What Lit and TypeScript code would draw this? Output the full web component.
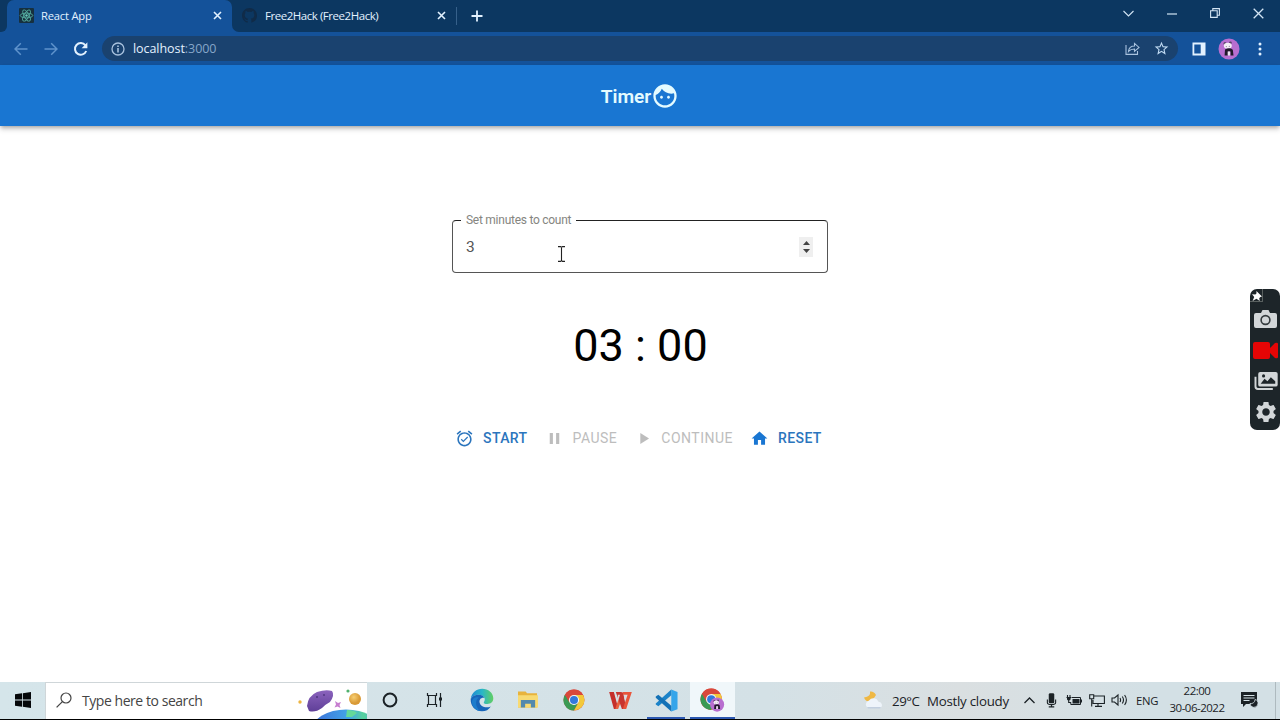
import { LitElement, html, css, svg } from "lit";
import { customElement } from "lit/decorators.js";

const icon = (name: string, size: number, body: unknown, box = "0 0 24 24", h = size) =>
  html`<svg class="ic ${name}" width=${size} height=${h} viewBox=${box} fill="currentColor">${body}</svg>`;

const line = (d: string, w = 1.2) =>
  svg`<path d=${d} fill="none" stroke="currentColor" stroke-width=${w} />`;

const avatar = svg`
  <circle cx="11" cy="11" r="10.5" fill="#b86ed0"/>
  <circle cx="7" cy="5.600" r="1.500" fill="#5a4468"/><circle cx="12.400" cy="4.800" r="1.400" fill="#5a4468"/>
  <ellipse cx="9.800" cy="7.800" rx="4" ry="3" fill="#f4eef6"/>
  <circle cx="8.300" cy="8.600" r=".6" fill="#8c7a95"/><circle cx="11.300" cy="8.300" r=".6" fill="#8c7a95"/>
  <path d="M7 11.500q4.500-2.500 7.800.3l.7 5.700h-3v-4h-2.600v4H6.600z" fill="#20182a"/>
  <path d="M9.700 13.500h2.400v4H9.700z" fill="#eee4f0"/>`;

const chromeLogo = svg`
  <circle cx="12" cy="12" r="10.500" fill="#d9483b"/>
  <path d="M12 12 2.900 6.750A10.500 10.500 0 0 0 12 22.500l4.400-7.900z" fill="#3a9a53"/>
  <path d="M12 12 16.500 14.600 12 22.500A10.500 10.500 0 0 0 21.100 6.900H12z" fill="#f3c93a"/>
  <path d="M2.900 6.750 7.400 14.500 12 12V6.900h9.100A10.500 10.500 0 0 0 2.900 6.750z" fill="#d9483b"/>
  <circle cx="12" cy="12" r="5.100" fill="#f4f6f8"/><circle cx="12" cy="12" r="4" fill="#3379dc"/>`;

@customElement("browser-chrome")
class BrowserChrome extends LitElement {
  static styles = css`
    :host { display: block; height: 65px; flex: none; background: #14529a; color: #e2f1ff;
      font-family: "Open Sans", "Noto Sans", sans-serif; }
    svg { display: block; flex: none; }
    .strip { display: flex; height: 32px; background: #0c3761; }
    .lead { width: 7px; background: #0c3761; border-radius: 0 0 6px 0; }
    .under { background: #14529a; display: flex; }
    .tab { display: flex; align-items: center; box-sizing: border-box; height: 32px; padding-bottom: 1px; font-size: 11.500px; white-space: nowrap; }
    .tab span { flex: 1; }
    .active { width: 225px; padding-left: 12px; padding-right: 10px; background: #14529a; border-radius: 7px 7px 0 0; }
    .active span { margin-left: 7px; letter-spacing: -0.2px; font-size: 11.200px; }
    .idle { width: 224px; padding-left: 10px; padding-right: 10px; background: #0c3761; border-radius: 0 0 0 7px; }
    .idle span { margin-left: 8px; letter-spacing: -0.46px; }
    .sep { width: 1px; height: 18px; margin-top: 7px; background: #36608a; }
    .plus { margin: 10px 0 0 14px; }
    .win { display: flex; align-items: center; margin-left: auto; height: 26px; color: #d2e4f4; }
    .v { margin-right: 33px; }
    .min { margin-right: 33px; }
    .max { margin-right: 33px; }
    .cls { margin-right: 16px; }
    .bar { display: flex; align-items: center; height: 33px; }
    .back { margin-left: 14px; color: #5f93cc; }
    .fwd { margin-left: 16px; color: #5f93cc; }
    .reload { margin-left: 15px; }
    .omni { display: flex; align-items: center; margin-left: 13px; width: 1076px; height: 25px; box-sizing: border-box;
      border-radius: 13px; background: #1a426f; padding: 0 9px; }
    .url { flex: 1; margin-left: 8px; font-size: 12.500px; letter-spacing: -0.06px; }
    .url b { font-weight: 400; color: #86a6c9; }
    .info, .share { color: #a9c2de; }
    .star { margin-left: 14px; color: #c0daf2; }
    .side { margin-left: 14px; }
    .av { margin-left: 12px; }
    .dots { margin-left: 18px; }
  `;
  render() {
    const close = icon("x", 9, line("M1 1l7 7M8 1l-7 7", 1.6), "0 0 9 9");
    return html`
      <div class="strip">
        <div class="under"><div class="lead"></div></div>
        <div class="tab active">
          ${icon("react", 15, svg`<rect width="15" height="15" rx="1" fill="#16303f"/>
            <g fill="none" stroke="#52aa9d" stroke-width=".9">
              <ellipse cx="7.500" cy="7.500" rx="6.300" ry="2.400"/>
              <ellipse cx="7.500" cy="7.500" rx="6.300" ry="2.400" transform="rotate(60 7.500 7.500)"/>
              <ellipse cx="7.500" cy="7.500" rx="6.300" ry="2.400" transform="rotate(120 7.500 7.500)"/></g>
            <circle cx="7.500" cy="7.500" r="1.200" fill="#67cabd"/>`, "0 0 15 15")}
          <span>React App</span>${close}
        </div>
        <div class="under"><div class="tab idle">
          ${icon("gh", 15, svg`<path fill="#102b48" d="M8 0C3.580 0 0 3.580 0 8c0 3.540 2.290 6.530 5.470 7.590.4.070.55-.17.55-.38v-1.490c-2.230.48-2.700-.94-2.700-.94-.36-.92-.89-1.170-.89-1.170-.73-.5.050-.49.050-.49.810.060 1.230.83 1.230.83.720 1.230 1.880.87 2.340.67.070-.52.280-.88.510-1.080-1.780-.2-3.640-.89-3.640-3.950 0-.87.310-1.590.820-2.150-.08-.2-.36-1.020.080-2.120 0 0 .67-.21 2.200.82a7.600 7.600 0 0 1 4 0c1.530-1.040 2.200-.82 2.200-.82.440 1.100.160 1.920.080 2.120.510.560.820 1.270.820 2.150 0 3.070-1.870 3.750-3.650 3.950.290.250.540.730.540 1.480v2.190c0 .21.150.46.550.38A8 8 0 0 0 16 8c0-4.420-3.580-8-8-8z"/>`, "0 0 16 16")}
          <span>Free2Hack (Free2Hack)</span>${close}
        </div></div>
        <div class="sep"></div>
        ${icon("plus", 12, line("M6 .5v11M.5 6h11", 1.8), "0 0 12 12")}
        <div class="win">
          ${icon("v", 11, line("M.5 3l5 5 5-5", 1.1), "0 0 11 11")}
          ${icon("min", 10, line("M0 6h10", 1.2), "0 0 10 10")}
          ${icon("max", 10, line("M.6 2.800h6.600v6.600H.6zM2.800 2.800V.6h6.600v6.600H7.200", 1.1), "0 0 10 10")}
          ${icon("cls", 11, line("M.7.7l9.600 9.600M10.300.7L.7 10.300", 1.3), "0 0 11 11")}
        </div>
      </div>
      <div class="bar">
        ${icon("back", 14, line("M13.500 7H1.200M6.800 1.200L1 7l5.800 5.800", 1.5), "0 0 14 14")}
        ${icon("fwd", 14, line("M.5 7h12.300M7.200 1.200L13 7l-5.800 5.800", 1.5), "0 0 14 14")}
        ${icon("reload", 16, svg`${line("M13.200 10a5.800 5.800 0 1 1-.8-5.600", 2)}<path d="M14.400 1.300v6H8.600z"/>`, "0 0 16 16")}
        <div class="omni">
          ${icon("info", 14, svg`<circle cx="7" cy="7" r="6" fill="none" stroke="currentColor" stroke-width="1.300"/><path d="M6.200 6h1.600v4.400H6.200zM6.200 3.400h1.600V5H6.200z"/>`, "0 0 14 14")}
          <div class="url">localhost<b>:3000</b></div>
          ${icon("share", 15, line("M1 4v9.400h11.500V10M3.500 10.500c.4-3.700 2.400-5.500 6-5.500V2.400L14 6.400l-4.500 4V8c-2.800 0-4.600.8-6 2.500z", 1.1), "0 0 15 15")}
          ${icon("star", 15, svg`<path fill-rule="evenodd" d="M22 9.240l-7.190-.62L12 2 9.190 8.630 2 9.240l5.460 4.730L5.820 21 12 17.270 18.180 21l-1.630-7.030L22 9.240zM12 15.400l-3.760 2.270 1-4.280-3.320-2.880 4.380-.38L12 6.100l1.710 4.040 4.380.38-3.320 2.880 1 4.280L12 15.400z"/>`, "1 1 22 22")}
        </div>
        ${icon("side", 14, svg`<path fill-rule="evenodd" d="M.5.5h13v13H.5zM2.300 2.500v9h6.400v-9z"/>`, "0 0 14 14")}
        ${icon("av", 22, avatar, "0 0 22 22")}
        ${icon("dots", 4, svg`<circle cx="2" cy="2" r="1.500"/><circle cx="2" cy="7" r="1.500"/><circle cx="2" cy="12" r="1.500"/>`, "0 0 4 14", 14)}
      </div>`;
  }
}

@customElement("timer-page")
class TimerPage extends LitElement {
  static styles = css`
    :host { display: flex; flex-direction: column; flex: 1; background: #fff; font-family: Roboto, sans-serif; }
    svg { display: block; flex: none; }
    .appbar { display: flex; align-items: center; justify-content: center; height: 61px; background: #1976d2; color: #e4fbff;
      font-size: 19.200px; font-weight: 600; letter-spacing: -0.05px; padding: 1px 0 0; box-sizing: border-box;
      box-shadow: 0 2px 4px -1px rgba(0,0,0,.3), 0 4px 5px rgba(0,0,0,.12); }
    .appbar span { padding-top: 1px; }
    .col { display: flex; flex-direction: column; align-items: center; width: 376px; margin: 85px auto 0; }
    fieldset { width: 376px; height: 62px; box-sizing: border-box;
      margin: 0; padding: 0 14px 0 13px; border: 1px solid #555; border-top-color: #222; border-radius: 4px; }
    legend { padding: 0 5px 0 5px; margin-left: -5px; font-size: 12px; line-height: 19px; letter-spacing: -0.26px; color: #85857f; }
    .entry { display: flex; align-items: center; justify-content: space-between; height: 33px; }
    .value { padding-top: 1px; font-size: 15.500px; color: #555; }
    .spin { display: flex; flex-direction: column; justify-content: space-between; align-items: center; box-sizing: border-box;
      width: 14px; height: 20px; padding: 4px 0; background: #efefef; color: #444; }
    .clock { margin-top: 46px; padding-left: 1px; font-size: 45px; line-height: 54px; color: #000; white-space: nowrap; }
    .actions { display: flex; align-items: center; width: 376px; height: 24px; margin-top: 53px; font-size: 14px; font-weight: 500;
      letter-spacing: 0.4px; color: #2b75bd; }
    .actions div { display: flex; align-items: center; white-space: nowrap; }
    .start { margin-left: 3px; gap: 9px; }
    .pause { margin-left: 17px; gap: 9px; }
    .cont { margin-left: 17px; gap: 8px; }
    .reset { margin-left: 17px; gap: 9px; }
    .off { color: #bdbdbd; font-weight: 400; letter-spacing: 0.5px; }
  `;
  render() {
    return html`
      <div class="appbar"><span>Timer</span>${icon("", 28, svg`<path d="M9 11.750c-.69 0-1.250.56-1.250 1.250s.56 1.250 1.250 1.250 1.250-.56 1.250-1.250-.56-1.250-1.250-1.250zm6 0c-.69 0-1.250.56-1.250 1.250s.56 1.250 1.250 1.250 1.250-.56 1.250-1.250-.56-1.250-1.250-1.250zM12 2C6.480 2 2 6.480 2 12s4.480 10 10 10 10-4.480 10-10S17.520 2 12 2zm0 18c-4.410 0-8-3.590-8-8 0-.29.020-.58.050-.86 2.360-1.050 4.230-2.980 5.210-5.370C11.070 8.330 14.050 10 17.420 10c.78 0 1.530-.09 2.250-.26.210.71.330 1.470.330 2.260 0 4.410-3.590 8-8 8z"/>`)}</div>
      <div class="col">
        <fieldset>
          <legend>Set minutes to count</legend>
          <div class="entry">
            <div class="value">3</div>
            <div class="spin">
              ${icon("", 7, svg`<path d="M0 4l3.500-4L7 4z"/>`, "0 0 7 4", 4)}
              ${icon("", 7, svg`<path d="M0 0l3.500 4L7 0z"/>`, "0 0 7 4", 4)}
            </div>
          </div>
        </fieldset>
        <div class="clock">03 : 00</div>
        <div class="actions">
          <div class="start">${icon("", 19, svg`<path d="M22 5.720l-4.600-3.860-1.290 1.530 4.600 3.860L22 5.720zM7.880 3.390L6.600 1.860 2 5.710l1.290 1.530 4.590-3.850zM12 4c-4.970 0-9 4.030-9 9s4.020 9 9 9c4.970 0 9-4.030 9-9s-4.030-9-9-9zm0 16c-3.870 0-7-3.130-7-7s3.130-7 7-7 7 3.130 7 7-3.130 7-7 7zm-1.460-5.470L8.410 12.400l-1.060 1.060 3.180 3.180 6-6-1.060-1.060-4.930 4.950z"/>`)}START</div>
          <div class="pause off">${icon("", 19, svg`<path d="M6 19h4V5H6v14zm8-14v14h4V5h-4z"/>`)}PAUSE</div>
          <div class="cont off">${icon("", 19, svg`<path d="M8 5v14l11-7z"/>`)}CONTINUE</div>
          <div class="reset">${icon("", 19, svg`<path fill="#1976d2" d="M10 20v-6h4v6h5v-8h3L12 3 2 12h3v8z"/>`)}RESET</div>
        </div>
      </div>`;
  }
}

@customElement("task-bar")
class TaskBar extends LitElement {
  static styles = css`
    :host { display: flex; flex: none; height: 38px; box-sizing: border-box; border-bottom: 1.500px solid #000;
      background: linear-gradient(90deg, #d5e5ea, #d4e1e6 60%, #dadfe1 75%, #d3e0e5 90%); color: #1b2226;
      font-family: "Open Sans", "Noto Sans", sans-serif; }
    svg { display: block; flex: none; }
    .cell { display: flex; align-items: center; justify-content: center; width: 46px; box-sizing: border-box; padding-bottom: 1px; }
    .home { width: 45px; color: #05070a; }
    .search { display: flex; align-items: center; width: 322px; box-sizing: border-box; padding-left: 10px; background: #fff;
      border: solid #cfd6d9; border-width: 1px 0 0 1px; color: #444; overflow: hidden; }
    .glass { margin-bottom: 2px; }
    .search span { flex: 1; margin: 0 0 1px 10px; font-size: 14px; letter-spacing: -0.45px; white-space: nowrap; }
    .run { margin: 0 4px; width: 38px; border-bottom: 2px solid #2b57b0; padding: 1px 0 0; }
    .on { width: 45px; margin-left: 1px; background: #f0f7fa; border-bottom: 2px solid #2b57b0; padding: 1px 0 0; }
    .tray { display: flex; align-items: center; margin-left: auto; padding-bottom: 1px; white-space: nowrap; }
    .temp { margin-left: 8px; padding-top: 1px; font-size: 13.300px; letter-spacing: -0.43px; width: 35px; }
    .sky { padding-top: 1px; font-size: 13.300px; letter-spacing: -0.26px; width: 97px; }
    .mic { margin-left: 11px; }
    .power { margin-left: 9px; }
    .net { margin-left: 7px; }
    .vol { margin-left: 6px; }
    .eng { width: 26px; margin-left: 8px; font-size: 11.300px; letter-spacing: -0.25px; }
    .time { display: flex; flex-direction: column; align-items: center; width: 60px; margin: -1px 0 0 5px; font-size: 11.500px;
      line-height: 16.500px; letter-spacing: -0.5px; }
    .note { margin-left: 14px; }
    .peek { align-self: stretch; width: 1px; margin: 0 4px -1px 17px; background: #aebabf; }
  `;
  render() {
    return html`
      <div class="cell home">${icon("", 16, svg`<path d="M0 2.300 7 1.300V7.600H0zM7.800 1.200 16 0v7.600H7.800zM0 8.400h7v6.300l-7-1zM7.800 8.400H16V16l-8.200-1.200z"/>`, "0 0 16 16")}</div>
      <div class="search">
        ${icon("glass", 16, svg`<circle cx="10" cy="6" r="5" fill="none" stroke="currentColor" stroke-width="1.200"/>${line("M6.400 9.600L.6 15.400", 1.3)}`, "0 0 16 16")}
        <span>Type here to search</span>
        ${icon("", 70, svg`
          <defs><linearGradient id="earth"><stop offset="0" stop-color="#3c6fd8"/><stop offset=".55" stop-color="#43a5e8"/><stop offset=".75" stop-color="#58d29c"/><stop offset="1" stop-color="#4ba9e0"/></linearGradient>
          <linearGradient id="rock" x2="0" y2="1"><stop offset="0" stop-color="#8b63bd"/><stop offset="1" stop-color="#5f3f98"/></linearGradient>
          <radialGradient id="moon" cx=".4" cy=".35"><stop offset="0" stop-color="#f7ce72"/><stop offset="1" stop-color="#d99a36"/></radialGradient></defs>
          <ellipse cx="49" cy="47" rx="34" ry="20.500" fill="url(#earth)"/>
          <path d="M50 27q8 0 10 3l-5 4h-6z" fill="#64d99a"/>
          <path d="M10 23q1-10 10-14 9-3 15-1 3 4-2 11-4 2-8 6-7 5-13 3z" fill="url(#rock)"/>
          <circle cx="20" cy="14" r="1" fill="#4d347e"/><circle cx="27" cy="12" r=".9" fill="#4d347e"/>
          <circle cx="58" cy="16" r="6" fill="url(#moon)"/><circle cx="3" cy="19" r="1.700" fill="#ecb541"/>
          <circle cx="51" cy="8" r="1.600" fill="#50b16d"/>
          <path d="M38 18l3 2 3-1-1.500 3 1 3-3-1.500-3 1 1.500-3z" fill="#c77ed0"/>`, "0 0 70 36", 36)}
      </div>
      <div class="cell">${icon("", 16, svg`<circle cx="8" cy="8" r="6.400" fill="none" stroke="currentColor" stroke-width="2"/>`, "0 0 16 16")}</div>
      <div class="cell">${icon("", 20, svg`${line("M1.500 1v2.500h9V1M1.500 15v-2.500h9V15M2.500 4v8M9.500 4v8M14.500 1v14", 1.2)}<path d="M13 5.500h3v3h-3z"/>`, "0 0 20 16", 16)}</div>
      <div class="cell">${icon("", 24, svg`
        <defs><linearGradient id="ea" x2="1"><stop offset="0" stop-color="#1e88d2"/><stop offset=".5" stop-color="#29b6c8"/><stop offset="1" stop-color="#62cf62"/></linearGradient></defs>
        <path d="M.7 11C1.500 4.500 6.500.7 12.200.7c6 0 11 4 11.100 9.600.1 3.900-2.800 5.700-5.900 5.700-2.800 0-4.200-.9-3.500-1.800 2.500-3.400-.5-7.400-5.100-7.400-4 0-7 1.700-8.100 4.200z" fill="url(#ea)"/>
        <path d="M.7 11C2 8.300 5 6.800 8.800 6.800c2.600 0 4.600 1.200 5.500 2.900-3.600-.5-5.300 2-4.700 4.800.8 3.900 5.800 6 11.200 3.900C18.900 21.600 15.800 23.300 12 23.300 5.500 23.300.3 18.300.7 11z" fill="#1765b9"/>
        <path d="M8.800 9.500c-4 2.500-3.500 9.500 1.200 13.600C4.500 22 1.500 17.500 2 13c1-3 3.500-4.500 6.800-3.500z" fill="#1c7ccc"/>`)}</div>
      <div class="cell">${icon("", 20, svg`
        <path d="M0 0h8l1.500 2H20v15H0z" fill="#e8b33c"/><path d="M0 4h21v13H0z" fill="#f8da72"/>
        <path d="M3 9h15v8h-4.500v-4h-6v4H3z" fill="#5289ad"/>`, "0 0 21 18", 18)}</div>
      <div class="cell">${icon("", 24, chromeLogo)}</div>
      <div class="cell">${icon("", 23, svg`
        <path d="M0 0h5l4.500 17-1 1H5z" fill="#c52f2b"/>
        <path d="M6.500 18h3L14.500 4.500 13 1.500h-1.500z" fill="#e9603f"/>
        <path d="M7 0h5.500q2 0 2.600 2L18 17l-1 1h-3.500z" fill="#c8352f"/>
        <path d="M9.200 3h2.300l-2.800 9z" fill="#dfd6d9"/>
        <path d="M14 0h10l-6 18h-3.500L19.500 3H15z" fill="#e9553b"/>
        <path d="M15.500 3.500h2.500l-1.400 5z" fill="#dfd6d9"/>`, "0 0 24 18", 17)}</div>
      <div class="cell run">${icon("", 23, svg`
        <path d="M17 .5 23.500 3v18L17 23.500z" fill="#35a5ea"/><path d="M17 .5v6L3.500 18 .8 16.300V15z" fill="#1b83c9"/>
        <path d="M17 23.500v-6L3.500 6 .8 7.700V9z" fill="#1371b6"/>`)}</div>
      <div class="cell on">${icon("", 25, svg`${chromeLogo}<g transform="translate(10.500 10) scale(.66)">${avatar}</g>`, "1 1 24.500 24.500")}</div>
      <div class="tray">
        ${icon("", 21, svg`<path d="M7 .5q1 5-6 6Q3 12 9 10l4-6Q11 0 7 .5z" fill="#efb844"/>
          <path d="M5 17a4 4 0 0 1 1-7.500 5.500 5.500 0 0 1 9.500 1.200A3.300 3.300 0 0 1 17 17z" fill="#eef4fa"/><path d="M4 16h14l-1 1.500H5z" fill="#c2cfdf"/>`, "0 0 21 18", 18)}
        <div class="temp">29°C</div><div class="sky">Mostly cloudy</div>
        ${icon("", 11, line("M.5 7l5-5 5 5", 1.3), "0 0 11 9", 9)}
        ${icon("mic", 11, svg`<rect x="3" y="0" width="6" height="11" rx="1.500"/>${line("M1.500 7v3.500q0 2 4.500 2t4.500-2V7M6 12v3M3 15h6", 1.2)}`, "0 0 12 16", 15)}
        ${icon("power", 16, svg`${line("M1.500 1v2M4 1v2M.5 3.500H5M2.700 4v4.500h2.500", 1.1)}<path d="M1 3.500h3.600v2L3 6.500H2L1 5.500z"/>${line("M5.500 3.500h9v7H4.800V9M15.500 5.500v3", 1)}<path d="M6.500 5h7v4.500h-7z"/>`, "0 0 16 13", 13)}
        ${icon("net", 16, line("M5 2h10.400v7.500H4V6M9 10v2.500M6 12.400h7M.7.7h4v4h-4zM2.700 5v7.500", 1.1), "0 0 16 13", 13)}
        ${icon("vol", 17, line("M1 5h2.500L7 2v10L3.500 9H1zM9 5q1.200 2 0 4M11.300 3.500q2.400 3.500 0 7M13.600 2q3.600 5 0 10", 1.1), "0 0 17 14", 14)}
        <div class="eng">ENG</div>
        <div class="time"><div>22:00</div><div>30-06-2022</div></div>
        <div class="note">${icon("", 17, svg`<path d="M0 0h16v12H5l-3 3v-3H0z"/><path d="M2.500 3.500h11M2.500 6h11M2.500 8.500h6" stroke="#d5e2e7" stroke-width="1"/><path d="M9 11.500a4 4 0 0 0 5-4 4 4 0 1 1-5 4z" stroke="#d5e2e7" stroke-width=".8"/>`, "0 0 17 16", 16)}</div>
        <div class="peek"></div>
      </div>`;
  }
}

@customElement("app-root")
class AppRoot extends LitElement {
  static styles = css`
    :host { display: flex; flex-direction: column; position: relative; width: 1280px; height: 720px; overflow: hidden; background: #fff; }
    svg { display: block; flex: none; }
    .recorder { position: absolute; right: 0; top: 289px; display: flex; flex-direction: column; align-items: flex-end; width: 30px;
      height: 141px; box-sizing: border-box; background: #1d2529; border-radius: 7px; color: #d2d6d8; padding-right: 3px; }
    .pin { align-self: flex-start; width: 13px; height: 13px; box-sizing: border-box; padding: 2px 0 0 2px; border: solid #59605f; border-width: 0 1px 1px 0; color: #fff; }
    .cam { margin-top: 8px; }
    .rec { margin: 14px -1px 0 0; color: #e50505; }
    .gal { margin-top: 13px; margin-right: -1px; }
    .gear { margin-top: 11px; }
    .cursor { position: absolute; left: 557px; top: 246px; color: #222; }
  `;
  render() {
    return html`
      <browser-chrome></browser-chrome>
      <timer-page></timer-page>
      <task-bar></task-bar>
      <div class="cursor">${icon("", 9, line("M1 .6h2.500l1 .8 1-.8H8M1 15.400h2.500l1-.8 1 .8H8M4.500 1v14", 1.1), "0 0 9 16", 16)}</div>
      <div class="recorder">
        <div class="pin">${icon("", 10, svg`<path d="M4 0l5 5-1.500.5-1 1 .5 2.500-3-2-3.500 2L2 5.500 0 3l3 .2 1-1z"/>`, "0 0 9 9")}</div>
        <div class="cam">${icon("", 23, svg`<path d="M2 3h5l1.500-3h6L16 3h5q2 0 2 2v11q0 2-2 2H2q-2 0-2-2V5q0-2 2-2z"/><circle cx="11.500" cy="10" r="4.400" fill="#d2d6d8" stroke="#343b3e" stroke-width="1.600"/>`, "0 0 23 18", 18)}</div>
        <div class="rec">${icon("", 25, svg`<path d="M2 0h13q2 0 2 2v4l5-5q3-1 3 1v13q0 2-3 1l-5-5v4q0 2-2 2H2q-2 0-2-2V2q0-2 2-2z"/>`, "0 0 25 17", 17)}</div>
        <div class="gal">${icon("", 24, svg`<path d="M1.200 5v10q0 2.500 2.500 2.500H19" fill="none" stroke="currentColor" stroke-width="2"/>
          <rect x="4" y="0" width="20" height="15" rx="2"/><path d="M6.500 12l4-5 3 2.500 3.500-4 4.500 4V12z" fill="#1d2529"/><circle cx="9.500" cy="4" r="1.600" fill="#1d2529"/>`, "0 0 24 18.500", 18)}</div>
        <div class="gear">${icon("", 22, svg`<path d="M19.140 12.940c.04-.3.060-.61.060-.94 0-.32-.02-.64-.07-.94l2.030-1.580c.18-.14.230-.41.120-.61l-1.920-3.320c-.12-.22-.37-.29-.59-.22l-2.390.96c-.5-.38-1.030-.7-1.620-.94l-.36-2.540c-.04-.24-.24-.41-.48-.41h-3.840c-.24 0-.43.170-.47.410l-.36 2.540c-.59.240-1.130.570-1.620.940l-2.390-.96c-.22-.08-.47 0-.59.220L2.740 8.870c-.12.210-.08.470.120.610l2.030 1.580c-.05.3-.09.630-.09.940s.02.640.070.940l-2.030 1.580c-.18.140-.23.410-.12.610l1.920 3.320c.12.220.370.290.590.220l2.390-.96c.5.380 1.030.7 1.620.940l.36 2.540c.05.240.240.410.480.410h3.840c.24 0 .44-.17.470-.41l.36-2.540c.59-.24 1.130-.56 1.620-.94l2.390.96c.22.080.470 0 .59-.22l1.920-3.320c.12-.22.070-.47-.12-.61l-2.010-1.580zM12 15.600c-1.980 0-3.600-1.620-3.600-3.600s1.620-3.600 3.600-3.600 3.600 1.620 3.600 3.600-1.620 3.600-3.600 3.600z"/>`, "1.500 1.500 21 21")}</div>
      </div>`;
  }
}
